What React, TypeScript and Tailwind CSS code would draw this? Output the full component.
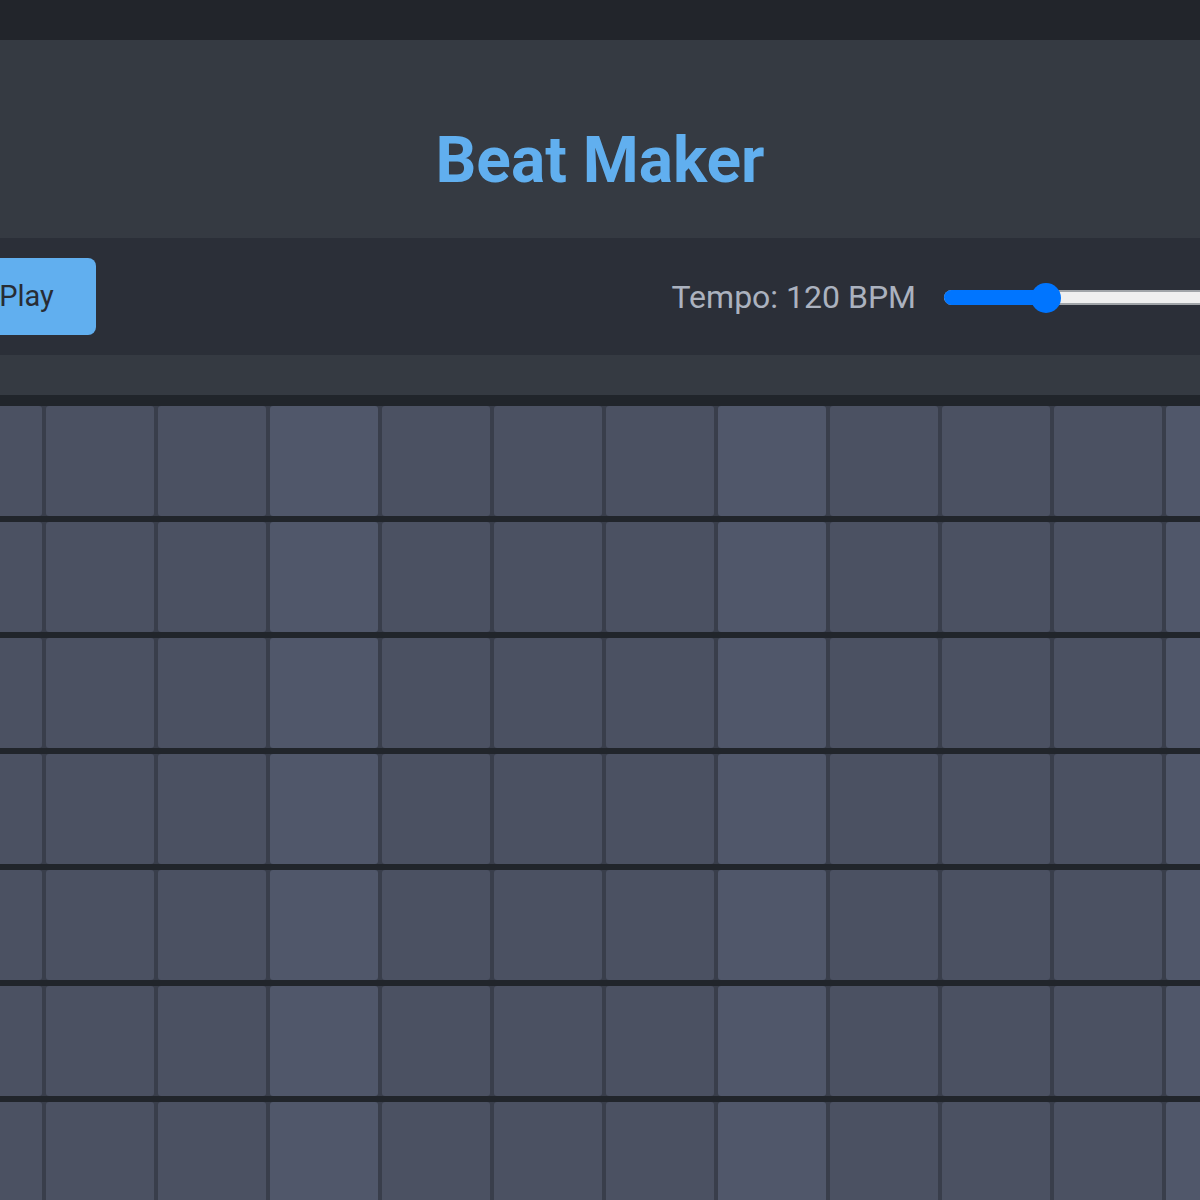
import { useState } from 'react';

const STEPS = 12;
const TRACKS = 8;
const MIN_TEMPO = 60;
const MAX_TEMPO = 240;

export default function App() {
  const [tempo] = useState(120);
  const [playing, setPlaying] = useState(false);
  const [pattern, setPattern] = useState<boolean[][]>(() =>
    Array.from({ length: TRACKS }, () => Array(STEPS).fill(false))
  );

  const toggle = (r: number, c: number) => {
    setPattern((prev) =>
      prev.map((row, i) => (i === r ? row.map((v, j) => (j === c ? !v : v)) : row))
    );
  };

  // thumb travel = track width minus thumb diameter
  const pct = (tempo - MIN_TEMPO) / (MAX_TEMPO - MIN_TEMPO);
  const travel = 291 - 30;

  return (
    <div className="min-h-[1200px] w-full overflow-hidden bg-[#21252b] font-['Roboto',sans-serif]">
      <div className="h-[40px] bg-[#22252b] shadow-[0_2px_4px_rgba(0,0,0,0.25)]" />
      <div className="flex justify-center">
        <div className="w-[1366px] shrink-0 bg-[#353a42]">
          {/* Header */}
          <div className="pt-[40px]">
            <h1 className="mt-[43px] mb-[40px] text-center text-[64px] leading-[75px] font-bold text-[#61afef]">
              Beat Maker
            </h1>
          </div>

          {/* Controls */}
          <div className="flex h-[117px] items-center justify-between bg-[#2b2f38] pl-[40px] pr-[48px]">
            <button
              onClick={() => setPlaying(!playing)}
              className="h-[77px] w-[139px] rounded-[8px] bg-[#61afef] text-[29px] text-[#282c34]"
            >
              {playing ? 'Stop' : 'Play'}
            </button>
            <div className="flex items-center gap-[28px]">
              <span className="text-[32px] text-[#abb2bf]">Tempo: {tempo} BPM</span>
              <div className="relative mt-[2px] h-[15px] w-[291px]">
                <div className="absolute inset-0 rounded-full border-y-2 border-[#a0a4a8] bg-[#efefef]" />
                <div
                  className="absolute inset-y-0 left-0 rounded-l-full bg-[#0075ff]"
                  style={{ width: 15 + travel * pct }}
                />
                <div
                  className="absolute top-[-7px] h-[30px] w-[30px] rounded-full bg-[#0075ff]"
                  style={{ left: travel * pct }}
                />
              </div>
            </div>
          </div>
          <div className="h-[40px]" />

          {/* Step grid */}
          <div className="flex flex-col gap-[6px] bg-[#21252b] pl-[17px] pt-[11px]">
            {pattern.map((row, r) => (
              <div key={r} className="flex gap-[4px] bg-[#393e4b]">
                {row.map((on, c) => (
                  <button
                    key={c}
                    onClick={() => toggle(r, c)}
                    className={
                      'h-[110px] w-[108px] shrink-0 rounded-[3px] ' +
                      (on
                        ? 'bg-[#98c379]'
                        : (c + 1) % 4 === 0
                          ? 'bg-[#50576a]'
                          : 'bg-[#4b5162]')
                    }
                  />
                ))}
              </div>
            ))}
          </div>
        </div>
      </div>
    </div>
  );
}
